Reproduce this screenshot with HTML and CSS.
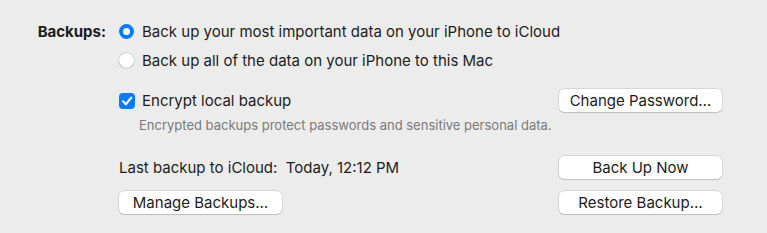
FILE: index.html
```html
<!DOCTYPE html>
<html>
<head>
<meta charset="utf-8">
<link rel="stylesheet" href="styles.css">
</head>
<body>
<div class="pane">
  <div class="label">Backups:</div>
  <div class="content">
    <div class="radio-row">
      <span class="radio on"></span>
      <span class="text">Back up your most important data on your iPhone to iCloud</span>
    </div>
    <div class="radio-row">
      <span class="radio"></span>
      <span class="text">Back up all of the data on your iPhone to this Mac</span>
    </div>
    <div class="row check-row">
      <div class="check-wrap">
        <span class="checkbox">
          <svg viewBox="0 0 16 16" width="16" height="16"><path d="M4 8.3 L7 11.2 L12.2 4.6" fill="none" stroke="#fff" stroke-width="2.1" stroke-linecap="round" stroke-linejoin="round"/></svg>
        </span>
        <span class="text">Encrypt local backup</span>
      </div>
      <button class="btn">Change Password…</button>
    </div>
    <div class="desc">Encrypted backups protect passwords and sensitive personal data.</div>
    <div class="row last-row">
      <span class="text">Last backup to iCloud:&nbsp; Today, 12:12 PM</span>
      <button class="btn">Back Up Now</button>
    </div>
    <div class="row bottom-row">
      <button class="btn">Manage Backups…</button>
      <button class="btn">Restore Backup…</button>
    </div>
  </div>
</div>
</body>
</html>
```
FILE: styles.css
```css
html, body {
  margin: 0;
  padding: 0;
  background: #ececec;
}
body {
  font-family: "Inter", "Liberation Sans", sans-serif;
  font-size: 15px;
  color: #1c1c1c;
  width: 767px;
  height: 233px;
  overflow: hidden;
}
.pane {
  display: grid;
  grid-template-columns: 106px 603px;
  column-gap: 13px;
  padding-top: 17px;
}
.label {
  text-align: right;
  font-weight: 700;
  height: 29px;
  line-height: 29px;
  color: #1c1c1c;
}
.content {
  display: flex;
  flex-direction: column;
}
.radio-row {
  display: flex;
  align-items: center;
  height: 29px;
  gap: 8px;
}
.radio {
  width: 15px;
  height: 15px;
  border-radius: 50%;
  background: #fff;
  box-shadow: 0 0 0 0.5px rgba(0,0,0,0.2), 0 0.5px 1px rgba(0,0,0,0.15);
  flex: none;
  box-sizing: border-box;
}
.radio.on {
  background: #fff;
  border: 4.5px solid #0a7aff;
  box-shadow: none;
}
.row {
  display: flex;
  align-items: center;
  justify-content: space-between;
}
.check-row {
  margin-top: 14px;
  height: 23px;
}
.check-wrap {
  display: flex;
  align-items: center;
  gap: 7px;
}
.checkbox {
  width: 16px;
  height: 16px;
  border-radius: 4px;
  background: #0a7aff;
  display: flex;
  flex: none;
}
.desc {
  margin-top: 5px;
  padding-left: 20px;
  font-size: 13px;
  line-height: 16px;
  color: #7a7a7a;
}
.last-row {
  margin-top: 23px;
  height: 23px;
}
.bottom-row {
  margin-top: 12px;
  height: 23px;
}
.btn {
  font-family: inherit;
  font-size: 15px;
  color: #1c1c1c;
  width: 163px;
  height: 23px;
  padding: 0;
  background: #fff;
  border: none;
  border-radius: 5px;
  box-shadow: 0 0 0 0.5px rgba(0,0,0,0.18), 0 1px 1px rgba(0,0,0,0.12);
}
```
